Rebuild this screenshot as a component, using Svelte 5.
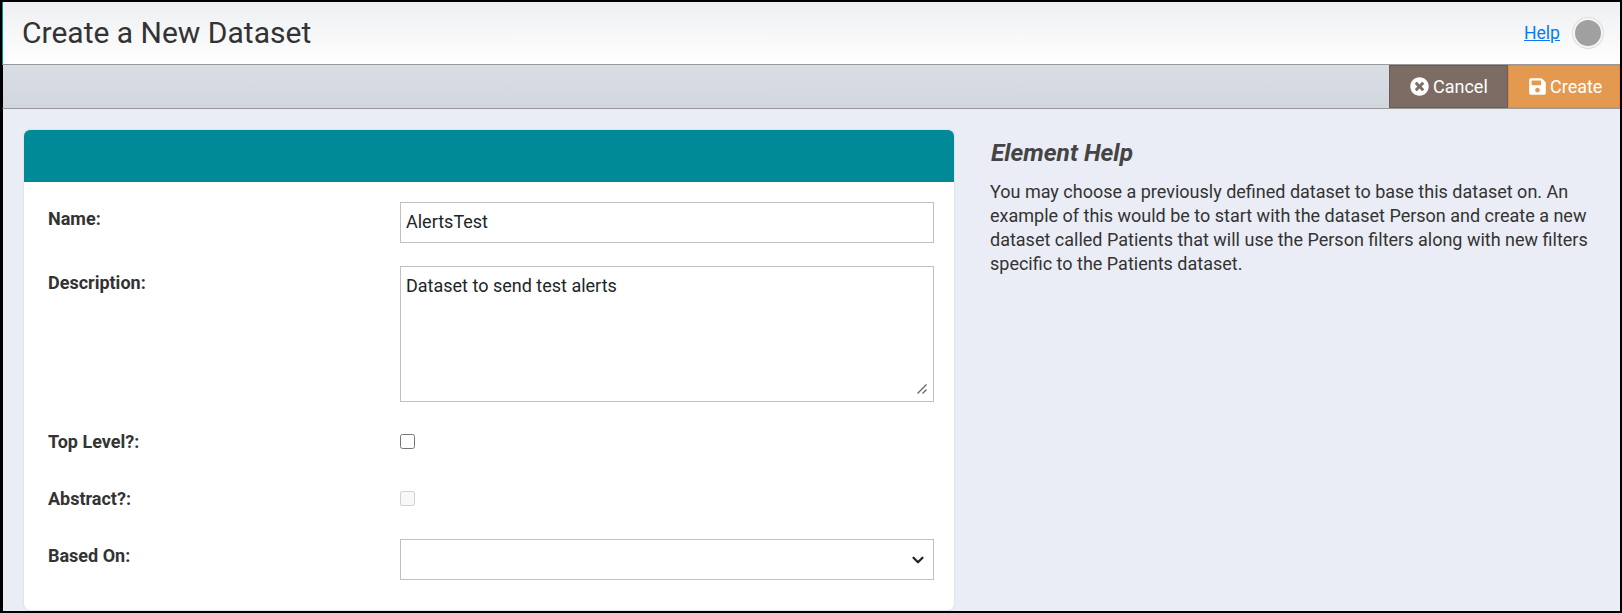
<script>
  let name = 'AlertsTest';
  let description = 'Dataset to send test alerts';
</script>

<div class="frame">
  <header class="page-header">
    <h1>Create a New Dataset</h1>
    <div class="header-right">
      <a href="#help">Help</a>
      <span class="status"></span>
    </div>
  </header>

  <div class="toolbar">
    <button class="btn cancel">
      <svg viewBox="0 0 512 512" width="19" height="19"><path fill="currentColor" d="M256 8C119 8 8 119 8 256s111 248 248 248 248-111 248-248S393 8 256 8zm121.6 313.1c4.7 4.7 4.7 12.3 0 17L338 377.6c-4.7 4.7-12.3 4.7-17 0L256 312l-65.1 65.6c-4.7 4.7-12.3 4.7-17 0L134.4 338c-4.7-4.7-4.7-12.3 0-17l65.6-65-65.6-65.1c-4.7-4.7-4.7-12.3 0-17l39.6-39.6c4.7-4.7 12.3-4.7 17 0l65 65.7 65.1-65.6c4.7-4.7 12.3-4.7 17 0l39.6 39.6c4.7 4.7 4.7 12.3 0 17L312 256l65.6 65.1z"/></svg>
      Cancel
    </button>
    <button class="btn create">
      <svg viewBox="0 0 448 512" width="17" height="19"><path fill="currentColor" d="M433.941 129.941l-83.882-83.882A48 48 0 0 0 316.118 32H48C21.49 32 0 53.49 0 80v352c0 26.51 21.49 48 48 48h352c26.51 0 48-21.49 48-48V163.882a48 48 0 0 0-14.059-33.941zM224 416c-35.346 0-64-28.654-64-64 0-35.346 28.654-64 64-64s64 28.654 64 64c0 35.346-28.654 64-64 64zm96-304.52V212c0 6.627-5.373 12-12 12H76c-6.627 0-12-5.373-12-12V108c0-6.627 5.373-12 12-12h228.52c3.183 0 6.235 1.264 8.485 3.515l3.48 3.48A11.996 11.996 0 0 1 320 111.48z"/></svg>
      Create
    </button>
  </div>

  <main class="content">
    <section class="card">
      <div class="card-head"></div>
      <form class="card-body">
        <div class="row">
          <label for="name">Name:</label>
          <input id="name" type="text" bind:value={name} />
        </div>
        <div class="row">
          <label for="description">Description:</label>
          <div class="textarea-wrap">
            <textarea id="description" bind:value={description}></textarea>
            <svg class="grip" viewBox="0 0 10 10" width="10" height="10">
              <path d="M0.5 9.5L9.5 0.5M5.5 9.5L9.5 5.5" stroke="#666" stroke-width="1.3" fill="none" />
            </svg>
          </div>
        </div>
        <div class="row check">
          <label for="top">Top Level?:</label>
          <input id="top" type="checkbox" />
        </div>
        <div class="row check">
          <label for="abstract">Abstract?:</label>
          <input id="abstract" type="checkbox" disabled />
        </div>
        <div class="row">
          <label for="based">Based On:</label>
          <select id="based"><option></option></select>
        </div>
      </form>
    </section>

    <aside class="help">
      <h2>Element Help</h2>
      <p>You may choose a previously defined dataset to base this dataset on. An example of this would be to start with the dataset Person and create a new dataset called Patients that will use the Person filters along with new filters specific to the Patients dataset.</p>
    </aside>
  </main>
</div>

<style>
  :global(body) {
    margin: 0;
  }

  .frame {
    box-sizing: border-box;
    height: 613px;
    border: 2px solid #000;
    display: flex;
    flex-direction: column;
    overflow: hidden;
    font-family: Roboto, "Liberation Sans", sans-serif;
    color: #333;
    background: #eaedf5;
  }

  /* Header */
  .page-header {
    box-sizing: border-box;
    height: 63px;
    flex: none;
    display: flex;
    align-items: center;
    justify-content: space-between;
    padding: 0 19px;
    border-left: 1px solid #008996;
    border-bottom: 1px solid #999;
    background: linear-gradient(#eeeff1, #fff);
  }

  h1 {
    margin: 0;
    font-size: 30px;
    font-weight: 400;
    line-height: 60px;
    color: #333;
  }

  .header-right {
    display: flex;
    align-items: center;
    gap: 15px;
  }

  .header-right a {
    font-size: 17.6px;
    color: #007bff;
  }

  .status {
    width: 26px;
    height: 26px;
    border-radius: 50%;
    background: #a0a0a0;
    box-shadow: 0 0 0 2px #f6f6f6, 0 0 0 3px #ddd;
  }

  /* Toolbar */
  .toolbar {
    box-sizing: border-box;
    height: 44px;
    flex: none;
    display: flex;
    justify-content: flex-end;
    border-left: 1px solid #000;
    border-bottom: 1px solid #999;
    background: linear-gradient(#d9dde4, #d2d6df);
  }

  .btn {
    display: flex;
    align-items: center;
    gap: 4px;
    height: 100%;
    padding: 0 0 0 20px;
    border: 1px solid;
    border-radius: 0;
    font-family: inherit;
    font-size: 18px;
    color: #fff;
  }

  .cancel {
    width: 119px;
    background: #7d6c64;
    border-color: #6b5c55;
  }

  .create {
    width: 112px;
    background: #e39a50;
    border-color: #e08e3c;
  }

  /* Main */
  .content {
    flex: 1;
    min-height: 0;
    display: flex;
    gap: 36px;
    padding: 21px 0 0 21px;
    border-left: 1px solid #000;
  }

  .card {
    width: 930px;
    height: 480px;
    flex: none;
    border-radius: 6px;
    overflow: hidden;
    background: #fff;
    box-shadow: 0 0 2px #c8ccd6;
  }

  .card-head {
    height: 52px;
    background: #008996;
  }

  .card-body {
    padding: 20px 19px 0 24px;
  }

  .row {
    display: flex;
    align-items: flex-start;
    margin-bottom: 23px;
  }

  .row.check {
    height: 34px;
    align-items: center;
  }

  label {
    width: 352px;
    flex: none;
    padding-top: 7px;
    font-size: 18px;
    font-weight: 700;
    line-height: 20px;
    color: #333;
  }

  .row.check label {
    padding-top: 0;
  }

  input[type='text'],
  textarea,
  select {
    box-sizing: border-box;
    width: 534px;
    height: 41px;
    padding: 0 5px 2px;
    border: 1px solid #c0c0c0;
    border-radius: 0;
    background-color: #fff;
    font-family: inherit;
    font-size: 18px;
    color: #212529;
    outline: none;
  }

  .textarea-wrap {
    position: relative;
    width: 534px;
    height: 136px;
  }

  textarea {
    height: 136px;
    padding: 8px 5px;
    display: block;
    resize: none;
  }

  .grip {
    position: absolute;
    right: 7px;
    bottom: 8px;
  }

  select {
    appearance: none;
    background-image: url("data:image/svg+xml,%3Csvg xmlns='http://www.w3.org/2000/svg' viewBox='0 0 16 16'%3E%3Cpath fill='none' stroke='%23212529' stroke-linecap='round' stroke-linejoin='round' stroke-width='3' d='M2 5l6 6 6-6'/%3E%3C/svg%3E");
    background-repeat: no-repeat;
    background-position: right 8px center;
    background-size: 14px 12px;
  }

  input[type='checkbox'] {
    width: 15px;
    height: 15px;
    margin: 0 0 1px;
  }

  /* Help panel */
  .help {
    flex: 1;
    padding-top: 8px;
    padding-right: 26px;
  }

  h2 {
    margin: 0 0 13px 1px;
    font-size: 24.4px;
    font-style: italic;
    font-weight: 700;
    line-height: 29px;
    color: #444;
  }

  p {
    margin: 0;
    font-size: 18px;
    line-height: 24px;
    color: #333;
  }
</style>
